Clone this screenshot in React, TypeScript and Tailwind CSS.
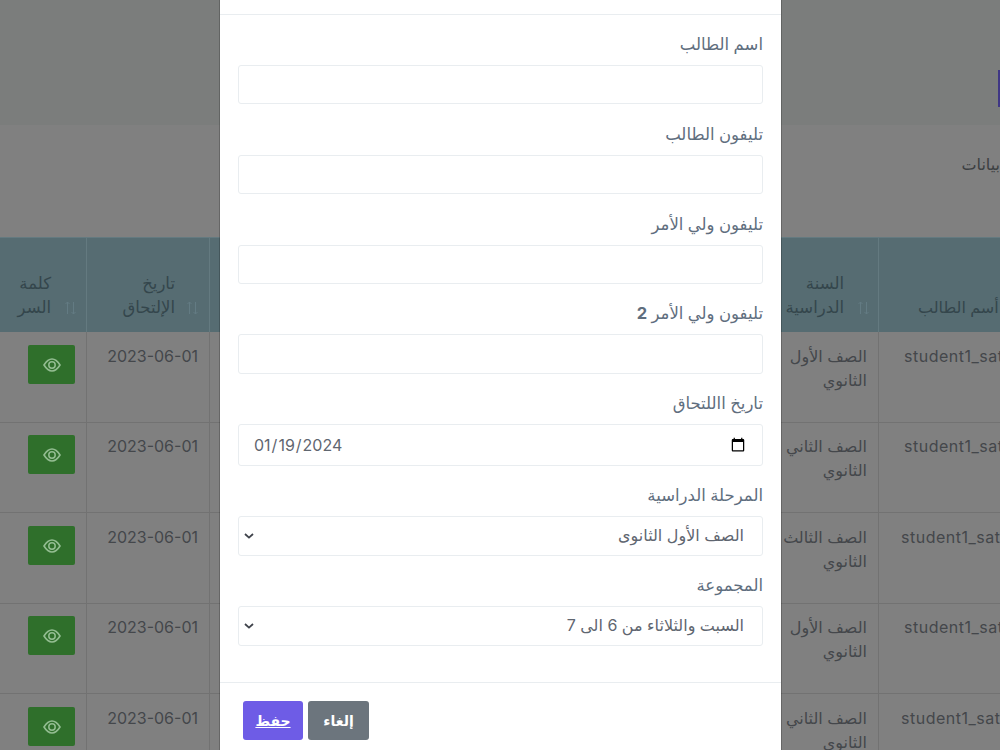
import React from "react";

const font = { fontFamily: '"Inter", "Noto Sans", "DejaVu Sans", sans-serif' };

function SortIcon() {
  return (
    <svg width="13" height="14" viewBox="0 0 13 14" className="text-[#637b83] shrink-0 mb-[4px]" fill="none" stroke="currentColor" strokeWidth="1">
      <path d="M3.5 13V1M1.5 3 3.5 1 5.5 3" />
      <path d="M9.5 1v12M7.5 11 9.5 13 11.5 11" />
    </svg>
  );
}

function EyeIcon() {
  return (
    <svg width="18" height="14" viewBox="0 0 18 14" fill="none" stroke="currentColor">
      <path strokeWidth="1.6" d="M1 7C3.6 2.8 6.2 1 9 1s5.4 1.8 8 6c-2.6 4.2-5.2 6-8 6S3.6 11.2 1 7Z" />
      <circle cx="9" cy="7" r="3.2" strokeWidth="1.5" />
    </svg>
  );
}

function Chevron() {
  return (
    <svg width="10" height="6" viewBox="0 0 10 6" fill="none" stroke="#3f434b" strokeWidth="1.8" className="absolute left-[6px] top-[17px] pointer-events-none">
      <path d="M1 1l4 3.6L9 1" />
    </svg>
  );
}

const rows = [
  { h: "h-[91px]", pt: "pt-[13px]", ptA: "pt-[12px]", year: "الصف الأول", email: "pl-[25px]" },
  { h: "h-[90px]", pt: "pt-[12px]", ptA: "pt-[11px]", year: "الصف الثاني", email: "pl-[25px]" },
  { h: "h-[91px]", pt: "pt-[13px]", ptA: "pt-[12px]", year: "الصف الثالث", email: "pl-[22px]" },
  { h: "h-[90px]", pt: "pt-[12px]", ptA: "pt-[11px]", year: "الصف الأول", email: "pl-[25px]" },
  { h: "h-[91px]", pt: "pt-[13px]", ptA: "pt-[12px]", year: "الصف الثاني", email: "pl-[22px]" },
];

function Field({ label, children, mb }: { label: React.ReactNode; children: React.ReactNode; mb: string }) {
  return (
    <div className={mb}>
      <label className="block text-right text-[16.5px] leading-[20px] font-medium text-[#5f6e7e] mb-[11px]">{label}</label>
      {children}
    </div>
  );
}

const inputCls = "block w-full bg-white border border-[#e9edf0] rounded-[3px] text-[16px] text-[#5f6670]";
const headCls = "h-[95px] bg-[#566c72] border-t border-[#647a80] flex items-end pb-[13px] text-[#34464c] text-[16.5px] font-medium";

function Select({ text }: { text: string }) {
  return (
    <div className="relative">
      <select className={`${inputCls} h-[40px] appearance-none pr-[18px] pb-[3px]`} defaultValue="a">
        <option value="a">{text}</option>
      </select>
      <Chevron />
    </div>
  );
}

export default function App() {
  return (
    <div className="relative w-[1000px] h-[750px] overflow-hidden bg-[#808080]" style={font}>
      {/* page behind */}
      <div className="h-[125px] bg-[#7b7d7c] flex justify-end items-start pt-[70px]">
        <div className="w-[2px] h-[37px] bg-[#3f3785]" />
      </div>
      <div className="h-[112px] flex justify-end pt-[27px]">
        <span dir="rtl" className="text-[16px] leading-[24px] text-[#3c3f42] w-[38px] overflow-hidden whitespace-nowrap">بيانات</span>
      </div>
      <div className="grid grid-cols-[86px_123px_575px_94px_122px] text-[16px] text-[#44474b]">
        {/* head */}
        <div className={`${headCls} justify-end gap-[13px] pr-[9px]`}>
          <span dir="rtl" className="w-[36px] text-right leading-[24px]">كلمة السر</span>
          <SortIcon />
        </div>
        <div className={`${headCls} border-l justify-end gap-[11px] pr-[10px]`}>
          <span dir="rtl" className="w-[60px] text-right leading-[24px]">تاريخ الإلتحاق</span>
          <SortIcon />
        </div>
        <div className={`${headCls} border-l`} />
        <div className={`${headCls} justify-end gap-[13px] pr-[8px]`}>
          <span dir="rtl" className="text-right leading-[24px] whitespace-nowrap">
            <span className="block">السنة</span>
            <span className="block">الدراسية</span>
          </span>
          <SortIcon />
        </div>
        <div className={`${headCls} border-l pl-[39px]`}>
          <span dir="rtl" className="whitespace-nowrap leading-[24px] text-[16px]">أسم الطالب</span>
        </div>
        {rows.map((r, i) => (
          <React.Fragment key={i}>
            <div className={`${r.h} ${r.pt} border-b border-[#727272] flex justify-end pr-[11px]`}>
              <div className="w-[47px] h-[39px] bg-[#2f6f2b] rounded-[2px] flex items-center justify-center text-[#93bd91]">
                <EyeIcon />
              </div>
            </div>
            <div className={`${r.h} ${r.pt} border-b border-l border-[#727272] pr-[11px] text-right leading-[22px]`}>2023-06-01</div>
            <div className={`${r.h} border-b border-l border-[#727272]`} />
            <div className={`${r.h} ${r.ptA} border-b border-[#727272] pr-[11px] text-right text-[16px] leading-[24px] whitespace-nowrap`} dir="rtl">
              <span className="block">{r.year}</span>
              <span className="block">الثانوي</span>
            </div>
            <div className={`${r.h} ${r.pt} border-b border-l border-[#727272] ${r.email} whitespace-nowrap overflow-hidden leading-[22px] tracking-[0.5px]`}>student1_saturday</div>
          </React.Fragment>
        ))}
      </div>

      {/* overlay modal */}
      <div className="absolute top-0 left-[219px] w-[563px] h-[750px] bg-white bg-clip-padding border-x border-black/20 flex flex-col">
        <div className="h-[15px] border-b border-[#e9edf0] shrink-0" />
        <div dir="rtl" className="px-[18px] pt-[19px]">
          <Field label="اسم الطالب" mb="mb-[20px]"><input className={`${inputCls} h-[39px] px-[15px]`} /></Field>
          <Field label="تليفون الطالب" mb="mb-[20px]"><input className={`${inputCls} h-[39px] px-[15px]`} /></Field>
          <Field label="تليفون ولي الأمر" mb="mb-[19px]"><input className={`${inputCls} h-[39px] px-[15px]`} /></Field>
          <Field label={<>تليفون ولي الأمر <span className="font-bold">2</span></>} mb="mb-[19px]"><input className={`${inputCls} h-[40px] px-[15px]`} /></Field>
          <Field label="تاريخ االلتحاق" mb="mb-[19px]"><input type="date" dir="ltr" defaultValue="2024-01-19" className={`${inputCls} h-[42px] pl-[14px] pr-[14px]`} /></Field>
          <Field label="المرحلة الدراسية" mb="mb-[19px]"><Select text="الصف الأول الثانوى" /></Field>
          <Field label="المجموعة" mb="mb-0"><Select text="السبت والثلاثاء من 6 الى 7" /></Field>
        </div>
        <div className="mt-[36px] border-t border-[#e9edf0] pt-[18px] pl-[23px] flex gap-[5px]">
          <button className="w-[60px] h-[39px] rounded-[3px] bg-[#6e5ce6] text-white text-[14px] font-semibold underline decoration-1">حفظ</button>
          <button className="w-[61px] h-[39px] rounded-[3px] bg-[#6c757d] text-white text-[14px] font-semibold">إلغاء</button>
        </div>
      </div>
    </div>
  );
}
